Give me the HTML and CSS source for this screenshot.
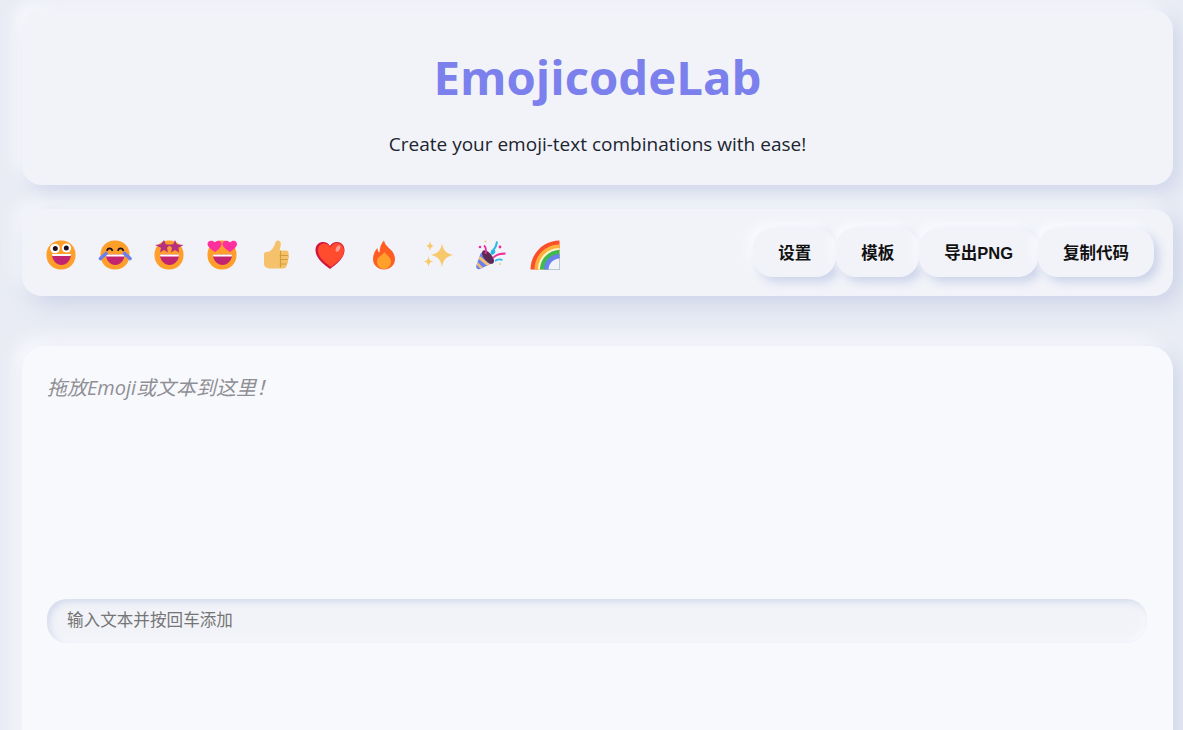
FILE: index.html
```html
<!DOCTYPE html>
<html lang="zh">
<head>
<meta charset="utf-8">
<title>EmojicodeLab</title>
<link rel="stylesheet" href="styles.css">
</head>
<body>
<header class="header">
  <h1 class="title">EmojicodeLab</h1>
  <p class="subtitle">Create your emoji-text combinations with ease!</p>
</header>
<section class="toolbar">
  <div class="emojis">
    <svg class="emoji" viewBox="0 0 30 30"><rect x="0.500" y="0.500" width="29" height="29" rx="14" fill="#ff9f2b"/><circle cx="9" cy="8.500" r="4.800" fill="#fff"/><circle cx="20.500" cy="8" r="4.600" fill="#fff"/><circle cx="9.300" cy="8.500" r="2.500" fill="#1c1020"/><circle cx="20.300" cy="8" r="2.500" fill="#1c1020"/><path d="M6 14H25C25 20.500 20.500 25 15.500 25S6 20.500 6 14Z" fill="#c2246f"/><path d="M6 14H25L24.700 16H6.300Z" fill="#fff"/></svg>
    <svg class="emoji" viewBox="0 0 30 30"><rect x="0.500" y="0.500" width="29" height="29" rx="14" fill="#ff9f2b"/><path d="M7 11C7.500 7.500 11.500 7.500 12.500 11M18 11C18.500 7.500 22.500 7.500 23.500 11" fill="none" stroke="#1c1020" stroke-width="1.600"/><path d="M6 14.500H24.500C24.500 20.500 20 25 15.200 25S6 20.500 6 14.500Z" fill="#c2246f"/><path d="M6 14.500H24.500L24.200 16.500H6.300Z" fill="#fff"/><path d="M0.500 18.500L6 13.500M24.500 13.500L30 18.500" stroke="#6a7ff0" stroke-width="3.600" stroke-linecap="round"/></svg>
    <svg class="emoji" viewBox="0 0 30 30"><rect x="0.500" y="0.500" width="29" height="29" rx="14" fill="#ff9f2b"/><path d="M6 14.500H25C25 20.500 20.500 25 15.500 25S6 20.500 6 14.500Z" fill="#c2246f"/><path d="M6 14.500H25L24.700 16.500H6.300Z" fill="#fff"/><path d="M10 0L11.800 4.200L16.500 4.700L13 7.700L14 12.500L10 10L6 12.500L7 7.700L1 5L6.800 4.200Z" fill="#b5307f"/><path d="M21 0L22.800 4.200L29.500 5L24.500 7.700L25 12.500L21 10L17 12.500L18 7.700L14.500 4.700L19.200 4.200Z" fill="#b5307f"/></svg>
    <svg class="emoji" viewBox="0 0 30 30"><rect x="0.500" y="0.500" width="29" height="29" rx="14" fill="#ff9f2b"/><path d="M6 14.500H25C25 20.500 20.500 25 15.500 25S6 20.500 6 14.500Z" fill="#c2246f"/><path d="M6 14.500H25L24.700 16.500H6.300Z" fill="#fff"/><path d="M8 12C4 9 0.500 7 0.500 4C0.500 0.500 5.500 -0.500 8 2.500C10.500 -0.500 14.500 0.500 14.500 4C14.500 7 12 9 8 12Z" fill="#ff2f9e"/><path d="M23 12C19 9 15.500 7 15.500 4C15.500 0.500 20.500 -0.500 23 2.500C25.500 -0.500 30 0.500 30 4C30 7 27 9 23 12Z" fill="#ff2f9e"/></svg>
    <svg class="emoji" viewBox="0 0 30 30"><path d="M3 14C3 12.500 4.500 12 6 12C9 12 12 9 13.500 5C14.500 2 15 0 17.500 0.500C20 1 20 4 19.500 6.500L18.500 10.500H25C27 10.500 28 12 27.500 14C28.500 16 28 18.500 27 19.500C27.500 21.500 27 23 26 24C26 27 24 28.500 22 28.500H10C6 28.500 3 27 3 24Z" fill="#f5c26b"/><path d="M19 15.500H26.500M19 19.500H26.500M19 24H25M19.500 11V27" fill="none" stroke="#d39a3a" stroke-width="1.100" stroke-linecap="round"/></svg>
    <svg class="emoji" viewBox="0 0 30 30"><path d="M15 29C9 24.500 0.500 18.500 0.500 10C0.500 4.500 4.500 2 8 2C11 2 13.500 3.500 15 6C16.500 3.500 19 2 22 2C26 2 29.500 5 29.500 10C29.500 18.500 21 24.500 15 29Z" fill="#d0163f"/><path d="M16 27C11 23 3 18 3 10.500C3 6 6 3.500 9 3.500C11.500 3.500 14 5 15.500 7.500C17 5 19 3 22 3C26 3 29 6 29 10.500C29 18 21 23 16 27Z" fill="#ff4b2e"/><ellipse cx="23" cy="8.500" rx="2" ry="3.500" transform="rotate(25 23 8.500)" fill="#ff9a90"/></svg>
    <svg class="emoji emoji-fire" viewBox="0 0 30 30"><path d="M15 0.500C16 5 19 7 22 10C24.500 12.500 26 16 26 19C26 25 21 29.500 15 29.500S4 25 4 19C4 14.500 6 10.500 8.500 8C8.500 10 9 12 10.500 12.500C10.500 8 12 3.500 15 0.500Z" fill="#ff5d22"/><path d="M15.500 12C17 15 22 17 22 21.500C22 25.500 19 29 15 29S8 25.500 8 21.500C8 17 13 15.500 15.500 12Z" fill="#ffa02b"/></svg>
    <svg class="emoji" viewBox="0 0 30 30"><path d="M19 3C20 10 22.500 13 30 15C22.500 17 20 20 19 27.500C18 20 15.500 17 8 15C15.500 13 18 10 19 3Z" fill="#f8c96b"/><path d="M7 1C7.500 4 8.500 5.500 11 6C8.500 6.500 7.500 8 7 11C6.500 8 5.500 6.500 3 6C5.500 5.500 6.500 4 7 1Z" fill="#f8c96b"/><path d="M5.500 16C6 19.500 7 21 10.500 21.500C7 22 6 23.500 5.500 27C5 23.500 4 22 0.500 21.500C4 21 5 19.500 5.500 16Z" fill="#f8c96b"/></svg>
    <svg class="emoji" viewBox="0 0 30 30"><path d="M1 28.500C0 27.500 0 26.500 0.500 25L5 12.500L17.500 22.500L5 28.500C3 29.500 2 29.500 1 28.500Z" fill="#6a7ff0"/><path d="M3.800 16L14 24.500L11 25.800L2.800 19ZM1.500 22L6.800 27.500L4.500 28.500L0.800 25Z" fill="#f5c26b"/><ellipse cx="12" cy="17" rx="4" ry="8" transform="rotate(-40 12 17)" fill="#5c2a52"/><path d="M8 5.500C10.500 7.500 10.500 10 9.500 14" fill="none" stroke="#f32a9a" stroke-width="1.800"/><path d="M16 13C17.500 9 20 11 17 13.500C15 15 14.500 11 18 9C20 7.500 20.500 4 21 1.500" fill="none" stroke="#29b6e8" stroke-width="2"/><path d="M17 18C19.500 15 24 13.500 29.500 13.500" fill="none" stroke="#f32a9a" stroke-width="1.800"/><path d="M19 21C21 19.500 24 19 26.500 20" fill="none" stroke="#29b6e8" stroke-width="1.800"/><circle cx="4" cy="7" r="1.300" fill="#f32a9a"/><circle cx="24" cy="7" r="1.400" fill="#f32a9a"/><circle cx="9.500" cy="1.500" r="1" fill="#f8c96b"/><circle cx="24" cy="24" r="1" fill="#f8c96b"/></svg>
    <svg class="emoji" viewBox="0 0 30 30"><path d="M0.500 29.500C0.500 13.500 13.500 0.500 29.500 0.500V29.500Z" fill="#f9502a"/><path d="M4.500 29.500C4.500 15.500 15.500 4.500 29.500 4.500V29.500Z" fill="#ffb13d"/><path d="M8 29.500C8 17.500 17.500 8 29.500 8V29.500Z" fill="#fff3c4"/><path d="M10 29.500C10 19 19 10 29.500 10V29.500Z" fill="#3fb950"/><path d="M14 29.500C14 21 21 14 29.500 14V29.500Z" fill="#6a7ff0"/><path d="M18.500 29.500C18.500 23.500 23.500 18.500 29.500 18.500V29.500Z" fill="#f1f3f8"/></svg>
  </div>
  <div class="actions">
    <button class="btn">设置</button>
    <button class="btn">模板</button>
    <button class="btn">导出PNG</button>
    <button class="btn">复制代码</button>
  </div>
</section>
<main class="canvas">
  <p class="hint">拖放Emoji或文本到这里！</p>
  <input class="text-input" type="text" placeholder="输入文本并按回车添加">
</main>
</body>
</html>
```
FILE: styles.css
```css
* { box-sizing: border-box; }
html { overflow: hidden; height: 100%; }
body {
  margin: 0;
  padding: 10px 10px 0 22px;
  height: 100%;
  overflow: hidden;
  background: #e9ecf4;
  font-family: "Open Sans", "Noto Sans CJK SC", sans-serif;
}
.header {
  height: 175px;
  border-radius: 20px;
  background: #f1f3f8;
  text-align: center;
  padding-top: 34px;
  box-shadow: 8px 8px 18px #d3d9ec, -8px -8px 14px #f7f8fc;
}
.title {
  margin: 0;
  font-size: 47.300px;
  line-height: 66px;
  font-weight: 700;
  color: #7b80ec;
}
.subtitle {
  margin: 21px 0 0;
  font-size: 19px;
  line-height: 26px;
  color: #20242e;
}
.toolbar {
  margin-top: 24px;
  height: 87px;
  border-radius: 20px;
  background: #f1f3f8;
  display: flex;
  align-items: center;
  justify-content: space-between;
  padding: 0 19px 0 24px;
  box-shadow: 8px 8px 24px #ccd3e8, -8px -8px 14px #f7f8fc;
}
.emojis { display: flex; gap: 23.800px; margin-top: 4px; }
.emoji { width: 30px; height: 30px; overflow: visible; display: block; }
.actions { display: flex; margin-top: -1px; }
.btn {
  height: 49px;
  padding: 0 25px;
  border: 0;
  border-radius: 20px;
  background: #f1f3f8;
  color: #111;
  font-family: "Liberation Sans", "Noto Sans CJK SC", sans-serif;
  font-size: 16.500px;
  font-weight: 700;
  box-shadow: 5px 5px 10px #cdd4ea, -5px -5px 10px #f9fafe;
}
.canvas {
  margin-top: 50px;
  height: 500px;
  border-radius: 24px;
  background: #f8f9fd;
  padding: 26px 26px 0 25px;
  box-shadow: 8px 8px 18px #d3d9ec, -8px -8px 14px #f7f8fc;
}
.hint {
  margin: 0;
  height: 228px;
  font-size: 20px;
  line-height: 32px;
  font-style: italic;
  color: #8f8f95;
}
.text-input {
  display: block;
  width: 100%;
  height: 44px;
  margin-top: -1px;
  border: 0;
  outline: 0;
  border-radius: 20px;
  background: #f1f3f8;
  padding: 0 20px;
  font-family: "Liberation Sans", "Noto Sans CJK SC", sans-serif;
  font-size: 16.600px;
  box-shadow: inset 3px 3px 7px #d5dbec, inset -3px -3px 7px #f9fafe;
}
.text-input::placeholder { color: #757575; opacity: 1; }
```
